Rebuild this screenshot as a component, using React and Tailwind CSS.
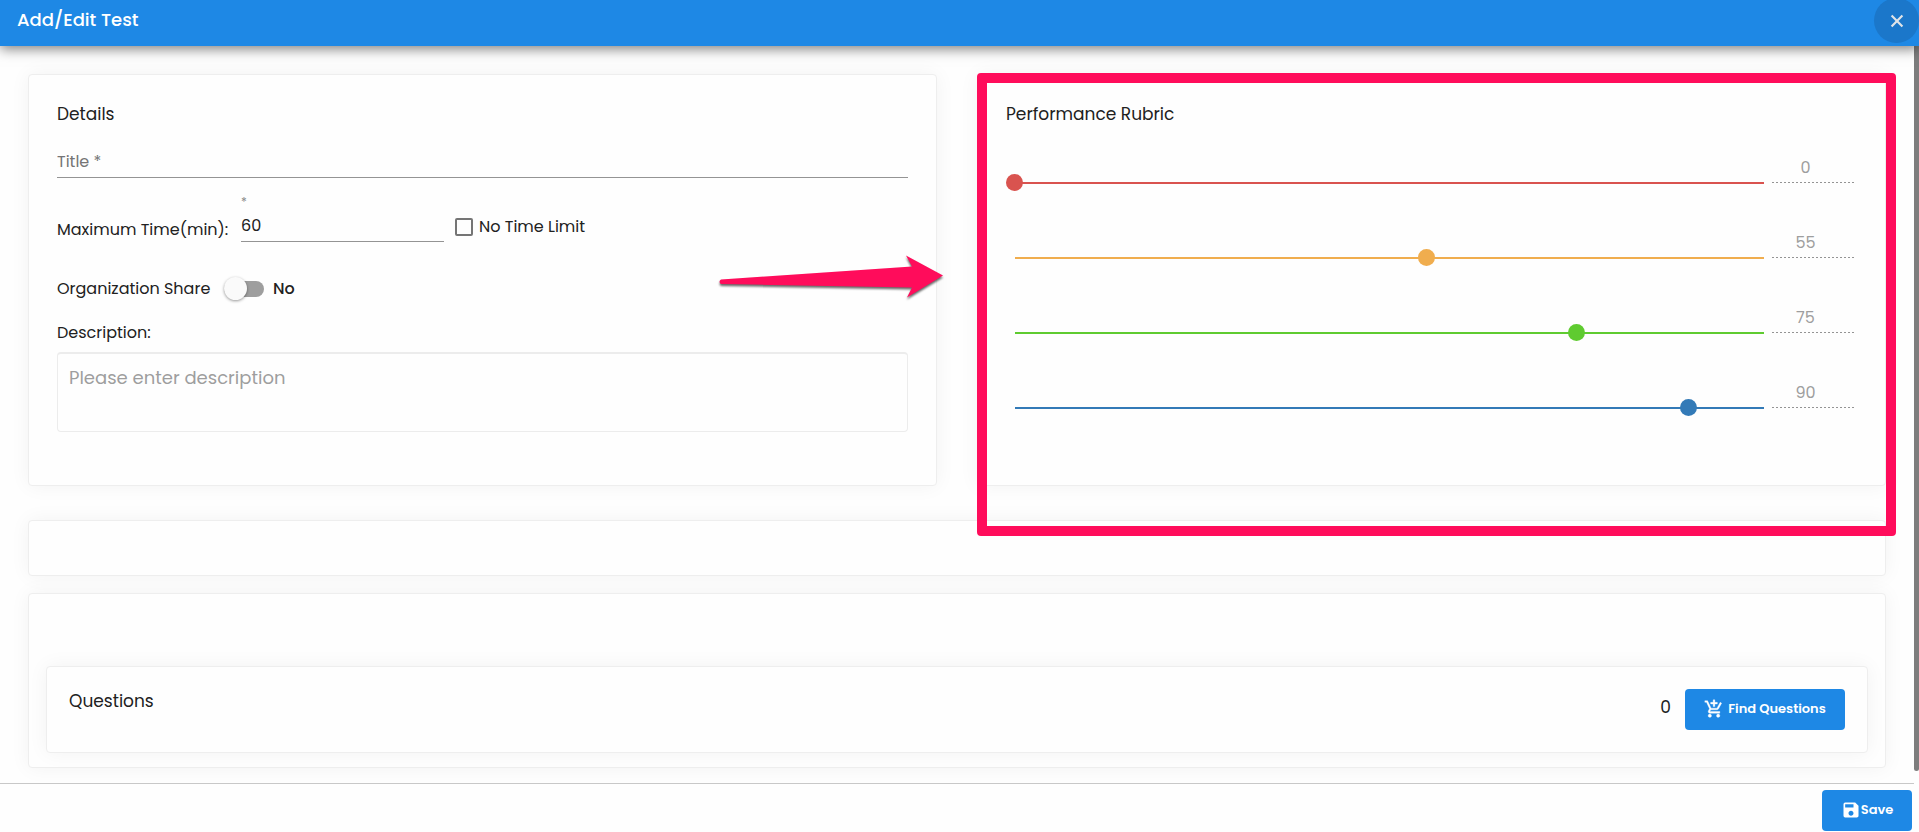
import React, { useState } from "react";
import { MdSave } from "react-icons/md";

const RUBRIC_LEVELS = [
  { id: "level-1", label: "Level 1", value: 0, color: "text-[#d9534f]" },
  { id: "level-2", label: "Level 2", value: 55, color: "text-[#f0ad4e]" },
  { id: "level-3", label: "Level 3", value: 75, color: "text-[#5fcb30]" },
  { id: "level-4", label: "Level 4", value: 90, color: "text-[#337ab7]" },
];

const CloseIcon = () => (
  <svg
    aria-hidden="true"
    viewBox="0 0 24 24"
    className="size-5"
    fill="none"
    stroke="currentColor"
    strokeWidth="2.6"
  >
    <path d="M5.500 5.500 L18.500 18.500 M18.500 5.500 L5.500 18.500" />
  </svg>
);

const CartPlusIcon = () => (
  <svg
    aria-hidden="true"
    viewBox="0 0 24 24"
    className="size-5"
    fill="currentColor"
    stroke="currentColor"
    strokeWidth="0.4"
  >
    <path d="M11 9h2V6h3V4h-3V1h-2v3H8v2h3v3zm-4 9c-1.1 0-1.990.9-1.990 2S5.900 22 7 22s2-.9 2-2-.9-2-2-2zm10 0c-1.1 0-1.990.9-1.990 2s.89 2 1.990 2 2-.9 2-2-.9-2-2-2zm-9.830-3.250l.03-.12.9-1.630h7.450c.75 0 1.410-.41 1.750-1.030l3.860-7.010L19.420 4h-.01l-1.1 2-2.760 5H8.530l-.13-.27L6.160 6l-.95-2-.94-2H1v2h2l3.600 7.590-1.350 2.450c-.16.28-.25.61-.25.96 0 1.1.9 2 2 2h12v-2H7.420c-.13 0-.25-.11-.25-.25z" />
  </svg>
);

const Card = ({ className = "", children }) => (
  <section
    className={`rounded border border-[#eeeeee] bg-[#fefefe] shadow-[0_0_20px_rgba(0,0,0,0.05)] ${className}`}
  >
    {children}
  </section>
);

const Header = () => (
  <header className="relative z-20 flex h-[46px] shrink-0 justify-between bg-[#1e88e5] pl-[17px] text-white shadow-[0_3px_12px_rgba(0,0,0,0.5)]">
    <h1 className="text-[18px] leading-10 font-medium">Add/Edit Test</h1>
    <button
      type="button"
      aria-label="Close"
      className="-mt-0.5 flex size-[45px] items-center justify-center rounded-full bg-[#1b77ca] text-[#e0e4e8]"
    >
      <CloseIcon />
    </button>
  </header>
);

const DetailsCard = () => {
  const [noLimit, setNoLimit] = useState(false);
  const [shared, setShared] = useState(false);

  return (
    <Card className="px-7 pt-6 pb-[53px]">
      <h2 className="text-[17px] leading-[30px]">Details</h2>

      <input
        type="text"
        aria-label="Title"
        placeholder="Title *"
        className="mt-[17px] block h-8 w-full border-b border-[#949494] outline-none placeholder:text-[#757575]"
      />

      <div className="mt-4 flex h-12 items-end">
        <label htmlFor="maxTime" className="w-[184px] leading-6">
          Maximum Time(min):
        </label>
        <div className="w-[203px]">
          <div className="text-xs leading-4 text-[#8a8a8a]">*</div>
          <input
            id="maxTime"
            type="text"
            defaultValue="60"
            className="block h-8 w-full border-b border-[#949494] outline-none"
          />
        </div>
        <label className="mb-[3px] ml-[11px] flex items-center gap-1.5">
          <input
            type="checkbox"
            checked={noLimit}
            onChange={(e) => setNoLimit(e.target.checked)}
            className="size-[18px] appearance-none rounded-xs border-2 border-[#757575] checked:bg-[#1e88e5]"
          />
          No Time Limit
        </label>
      </div>

      <label className="mt-[35px] flex items-center">
        <span className="w-[167px]">Organization Share</span>
        <input
          type="checkbox"
          role="switch"
          checked={shared}
          onChange={(e) => setShared(e.target.checked)}
          className="peer sr-only"
        />
        <span className="relative h-4 w-10 rounded-full bg-[#9e9e9e] before:absolute before:-top-1 before:left-0 before:size-[23px] before:rounded-full before:bg-[#fafafa] before:shadow-[0_1px_3px_rgba(0,0,0,0.4)] peer-checked:bg-[#1e88e5] peer-checked:before:left-[17px]" />
        <span className="ml-[9px] font-medium">{shared ? "Yes" : "No"}</span>
      </label>

      <label htmlFor="description" className="mt-5 block leading-6">
        Description:
      </label>
      <textarea
        id="description"
        placeholder="Please enter description"
        className="mt-[7px] block h-20 w-full resize-none rounded border border-t-2 border-[#ececec] px-[11px] py-2.5 text-[18px] leading-7 outline-none placeholder:text-[#9e9e9e]"
      />
    </Card>
  );
};

const RubricSlider = ({ id, label, value, color, onChange }) => (
  <div className="flex h-[75px] items-start pr-0.5">
    <input
      type="range"
      aria-label={label}
      min="0"
      max="100"
      value={value}
      onChange={(e) => onChange(id, e.target.value)}
      className={`mt-[26px] h-[17px] flex-1 appearance-none bg-linear-to-r from-current to-current bg-[length:calc(100%-17px)_2px] bg-center bg-no-repeat [&::-webkit-slider-thumb]:size-[17px] [&::-webkit-slider-thumb]:appearance-none [&::-webkit-slider-thumb]:rounded-full [&::-webkit-slider-thumb]:bg-current ${color}`}
    />
    <input
      type="text"
      aria-label={`${label} value`}
      value={value}
      disabled
      className="h-[35px] w-[83px] bg-[repeating-linear-gradient(to_right,#949494_0,#949494_2px,transparent_2px,transparent_4px)] bg-[length:100%_1px] bg-bottom bg-no-repeat pt-1 pr-4 text-center text-[#9e9e9e]"
    />
  </div>
);

// Callout frame and arrow drawn over the rubric card
const Callout = () => (
  <>
    <div className="pointer-events-none absolute -top-px -right-2.5 -bottom-[50px] left-0 z-10 rounded border-10 border-[#ff0c5b]" />
    <svg
      aria-hidden="true"
      viewBox="0 0 226 46"
      className="pointer-events-none absolute top-[181px] -left-[258px] z-10 h-[46px] w-[226px] overflow-visible drop-shadow-[0_2px_1px_rgba(0,0,0,0.6)]"
    >
      <path
        fill="#ff0c5b"
        d="M2 24.500 L193 11.500 L187 0.500 L224 20.500 L188 42.500 L193 32.500 L2 29 Q-1 26.500 2 24.500Z"
      />
    </svg>
  </>
);

const RubricCard = () => {
  const [levels, setLevels] = useState(RUBRIC_LEVELS);

  const handleChange = (id, value) => {
    setLevels(levels.map((l) => (l.id === id ? { ...l, value } : l)));
  };

  return (
    <div className="relative grid">
      <Card className="px-7 pt-6">
        <h2 className="text-[17px] leading-[30px]">Performance Rubric</h2>
        <div className="mt-[19px]">
          {levels.map((level) => (
            <RubricSlider key={level.id} {...level} onChange={handleChange} />
          ))}
        </div>
      </Card>
      <Callout />
    </div>
  );
};

const QuestionsCard = () => (
  <Card className="px-[17px] pt-[72px] pb-3.5">
    <Card className="flex items-start justify-between px-[22px] py-[22px]">
      <h2 className="text-[17px] leading-6">Questions</h2>
      <div className="flex items-start gap-3.5">
        <span className="text-[17px] leading-9">0</span>
        <button
          type="button"
          className="flex h-[41px] w-40 items-center justify-center gap-1 rounded bg-[#1e88e5] pb-0.5 text-[13px] font-semibold text-white"
        >
          <CartPlusIcon />
          Find Questions
        </button>
      </div>
    </Card>
  </Card>
);

export default function App() {
  return (
    <div className="flex h-screen flex-col overflow-hidden bg-[#fefefe] font-['Poppins','Inter',sans-serif] text-base text-[#212121]">
      <Header />
      <div className="flex min-h-0 flex-1">
        <div className="flex min-w-0 flex-1 flex-col">
          <main className="min-h-0 flex-1 px-7 pt-7">
            <div className="grid grid-cols-2 gap-10">
              <DetailsCard />
              <RubricCard />
            </div>
            <Card className="mt-[34px] h-14" />
            <div className="mt-[17px]">
              <QuestionsCard />
            </div>
          </main>
          <footer className="flex h-[49px] shrink-0 items-start justify-end border-t border-[#c8c8c8] pt-1.5 pr-0.5">
            <button
              type="button"
              className="flex h-[41px] w-[90px] items-center justify-center rounded bg-[#1e88e5] pb-0.5 text-[13px] font-semibold text-white"
            >
              <MdSave size={20} />
              Save
            </button>
          </footer>
        </div>
        <div className="mb-[61px] w-[5px] rounded-b bg-[#7d7d7d]" />
      </div>
    </div>
  );
}
